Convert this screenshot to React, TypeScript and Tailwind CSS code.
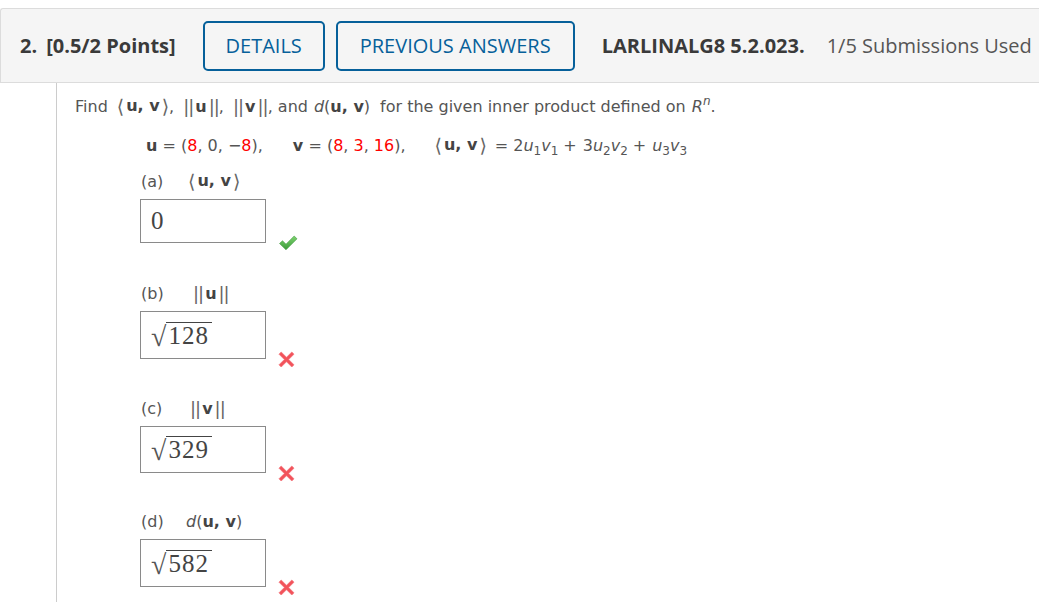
import React from "react";

const open = { fontFamily: '"Open Sans", sans-serif' };
const serif = { fontFamily: '"Liberation Serif", "Times New Roman", serif' };
const dv = { fontFamily: '"DejaVu Sans", Verdana, sans-serif' };

function Check() {
  return (
    <svg width="20" height="16" viewBox="0 0 20 16" className="block">
      <defs>
        <linearGradient id="gck" x1="0" y1="0" x2="0" y2="1">
          <stop offset="0" stopColor="#7fd46f" />
          <stop offset="1" stopColor="#3a9a3a" />
        </linearGradient>
      </defs>
      <path d="M1.5 8.5 L4.5 5.8 L8 9.2 L16.2 1 L19 3.8 L8 14.8 Z" fill="url(#gck)" stroke="#3f9a3f" strokeWidth="0.6" strokeLinejoin="round" />
    </svg>
  );
}

function Cross() {
  return (
    <svg width="17" height="17" viewBox="0 0 17 17" className="block">
      <path
        d="M3.2 1 L8.5 6.3 L13.8 1 L16 3.2 L10.7 8.5 L16 13.8 L13.8 16 L8.5 10.7 L3.2 16 L1 13.8 L6.3 8.5 L1 3.2 Z"
        fill="#f2535b"
        stroke="#f47a80"
        strokeWidth="0.8"
        strokeLinejoin="round"
      />
    </svg>
  );
}

function Ang({ children }: { children: React.ReactNode }) {
  return (
    <span className="inline-flex items-center">
      <span className="text-[#666] text-[19px] leading-none mr-[2px]">⟨</span>
      {children}
      <span className="text-[#666] text-[19px] leading-none ml-[2px]">⟩</span>
    </span>
  );
}

function Norm({ children }: { children: React.ReactNode }) {
  return (
    <span className="inline-flex items-center">
      <span className="text-[#666] text-[18px] leading-none tracking-[-1px]">||</span>
      <b className="text-[#444] mx-[2px]">{children}</b>
      <span className="text-[#666] text-[18px] leading-none tracking-[-1px]">||</span>
    </span>
  );
}

function Sqrt({ n }: { n: string }) {
  return (
    <span className="flex items-end">
      <span className="text-[28px] leading-none font-light text-[#555] mb-[-2px]">√</span>
      <span className="border-t border-[#444] leading-[26px] pl-[2px] pr-[3px] tracking-[1px]">{n}</span>
    </span>
  );
}

function Sub({ children }: { children: React.ReactNode }) {
  return <span className="text-[12px] relative top-[5px]">{children}</span>;
}

function Part({
  letter,
  label,
  value,
  ok,
  labelGap,
  mt,
  boxH,
}: {
  letter: string;
  label: React.ReactNode;
  value: React.ReactNode;
  ok: boolean;
  labelGap: string;
  mt: string;
  boxH: string;
}) {
  return (
    <div className={`${mt} ml-[65px]`}>
      <div className="flex items-center h-[20px] text-[16px] text-[#555]">
        <span className="w-[46px] pl-[1px]">({letter})</span>
        <span className={labelGap}>{label}</span>
      </div>
      <div className="flex items-end mt-[7px]">
        <div
          className={`${boxH} w-[126px] border border-[#8a8a8a] flex items-center pl-[10px] text-[25px] text-[#444]`}
          style={serif}
        >
          {value}
        </div>
        <div className={ok ? "ml-[12px] mb-[-8px]" : "ml-[12px] mb-[-9px]"}>{ok ? <Check /> : <Cross />}</div>
      </div>
    </div>
  );
}

export default function App() {
  return (
    <div className="w-[1039px] h-[602px] bg-white overflow-hidden pt-[8px]">
      <div
        className="h-[75px] bg-[#f5f5f5] border border-[#dcdcdc] border-r-0 rounded-tl-[3px] flex items-center pl-[19px] whitespace-nowrap text-[20px]"
        style={open}
      >
        <span className="font-bold text-[#3a3a3a]">2.</span>
        <span className="ml-[9px] font-bold text-[#3a3a3a]">[0.5/2 Points]</span>
        <div className="ml-[27px] h-[50px] w-[122px] border-2 border-[#06609a] rounded-[5px] flex items-center justify-center text-[#06609a]">
          DETAILS
        </div>
        <div className="ml-[11px] h-[50px] w-[239px] border-2 border-[#06609a] rounded-[5px] flex items-center justify-center text-[#06609a]">
          PREVIOUS ANSWERS
        </div>
        <span className="ml-[27px] font-bold text-[#3a3a3a]">LARLINALG8 5.2.023.</span>
        <span className="ml-[22px] text-[#555]">1/5 Submissions Used</span>
      </div>
      <div className="ml-[56px] border-l border-[#cccccc] h-[520px] pl-[18px] pt-[14px]" style={dv}>
        <div className="h-[20px] flex items-center text-[16px] text-[#555] whitespace-nowrap">
          <span>Find</span>
          <span className="ml-[9px]">
            <Ang>
              <b className="text-[#444]">u, v</b>
            </Ang>
          </span>
          <span>,</span>
          <span className="ml-[9px]">
            <Norm>u</Norm>
          </span>
          <span>,</span>
          <span className="ml-[9px]">
            <Norm>v</Norm>
          </span>
          <span>, and</span>
          <i className="ml-[6px]">d</i>
          <span>(</span>
          <b className="text-[#444]">u, v</b>
          <span>)</span>
          <span className="ml-[10px]">for the given inner product defined on</span>
          <i className="ml-[6px]">R</i>
          <span className="text-[12px] italic relative top-[-6px]">n</span>
          <span>.</span>
        </div>
        <div className="mt-[19px] ml-[71px] h-[20px] flex items-center text-[16px] text-[#555] whitespace-nowrap">
          <b className="text-[#444]">u</b>
          <span>&nbsp;=&nbsp;(</span>
          <span className="text-[#f00]">8</span>
          <span>, 0, −</span>
          <span className="text-[#f00]">8</span>
          <span>),</span>
          <b className="text-[#444] ml-[30px]">v</b>
          <span>&nbsp;=&nbsp;(</span>
          <span className="text-[#f00]">8</span>
          <span>,&nbsp;</span>
          <span className="text-[#f00]">3</span>
          <span>,&nbsp;</span>
          <span className="text-[#f00]">16</span>
          <span>),</span>
          <span className="ml-[29px]">
            <Ang>
              <b className="text-[#444]">u, v</b>
            </Ang>
          </span>
          <span className="ml-[8px]">=</span>
          <span className="ml-[5px]">2</span>
          <i>u</i>
          <Sub>1</Sub>
          <i>v</i>
          <Sub>1</Sub>
          <span className="ml-[5px]">+</span>
          <span className="ml-[6px]">3</span>
          <i>u</i>
          <Sub>2</Sub>
          <i>v</i>
          <Sub>2</Sub>
          <span className="ml-[5px]">+</span>
          <i className="ml-[6px]">u</i>
          <Sub>3</Sub>
          <i>v</i>
          <Sub>3</Sub>
        </div>
        <Part
          letter="a"
          mt="mt-[16px]"
          labelGap="ml-[2px]"
          boxH="h-[44px]"
          ok
          label={
            <Ang>
              <b className="text-[#444]">u, v</b>
            </Ang>
          }
          value={<span>0</span>}
        />
        <Part
          letter="b"
          mt="mt-[41px]"
          labelGap="ml-[7px]"
          boxH="h-[48px]"
          ok={false}
          label={<Norm>u</Norm>}
          value={<Sqrt n="128" />}
        />
        <Part
          letter="c"
          mt="mt-[40px]"
          labelGap="ml-[4px]"
          boxH="h-[47px]"
          ok={false}
          label={<Norm>v</Norm>}
          value={<Sqrt n="329" />}
        />
        <Part
          letter="d"
          mt="mt-[39px]"
          labelGap="ml-[0px]"
          boxH="h-[48px]"
          ok={false}
          label={
            <span>
              <i>d</i>(<b className="text-[#444]">u, v</b>)
            </span>
          }
          value={<Sqrt n="582" />}
        />
      </div>
    </div>
  );
}
